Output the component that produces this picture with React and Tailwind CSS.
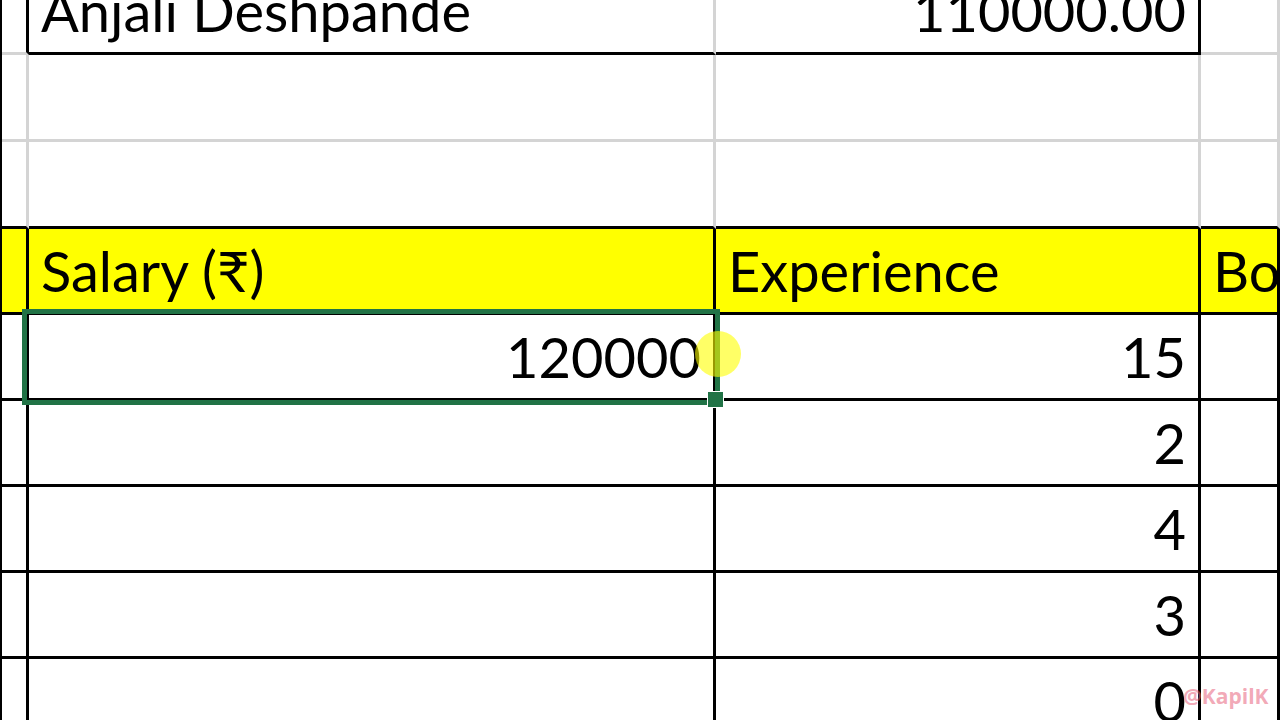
import React from 'react';

// one spreadsheet row: cells = [{text, align, bg, rc, bc}]
function Row({ cells, height = 'h-[87px]' }) {
  return (
    <div className={`grid grid-cols-[27px_687px_485px_79px] ${height}`}>
      {cells.map((c, i) => (
        <div
          key={i}
          className={`flex items-end border-r-[3px] border-b-[3px] pb-[13px] leading-none text-[56px] ${c.bg || 'bg-white'} ${
            c.align === 'right' ? 'justify-end pr-[12px]' : 'justify-start pl-[12px]'
          } overflow-hidden whitespace-nowrap`}
          style={{ borderRightColor: c.rc, borderBottomColor: c.bc }}
        >
          {c.text}
        </div>
      ))}
    </div>
  );
}

const cell = (text, align, rc, bc, bg) => ({ text, align, rc, bc, bg });

export default function App() {
  const black = '#000';
  const grid = '#d4d4d4';

  const data = [
    ['120000', '15'],
    ['', '2'],
    ['', '4'],
    ['', '3'],
    ['', '0'],
  ];

  return (
    <div className="relative w-[1280px] h-[720px] overflow-hidden bg-white border-l-2 border-black text-black font-['Lato','DejaVu_Sans',sans-serif]">
      <div className="-mt-[32px]">
        <Row
          cells={[
            cell('', 'left', black, grid),
            cell('Anjali Deshpande', 'left', grid, black),
            cell('110000.00', 'right', black, black),
            cell('', 'left', grid, grid),
          ]}
        />
        <Row
          cells={[
            cell('', 'left', grid, grid),
            cell('', 'left', grid, grid),
            cell('', 'left', grid, grid),
            cell('', 'left', grid, grid),
          ]}
        />
        <Row
          cells={[
            cell('', 'left', grid, black),
            cell('', 'left', grid, black),
            cell('', 'left', grid, black),
            cell('', 'left', grid, black),
          ]}
        />
        <Row
          height="h-[86px]"
          cells={[
            cell('', 'left', black, black, 'bg-[#ffff00]'),
            cell('Salary (₹)', 'left', black, black, 'bg-[#ffff00]'),
            cell('Experience', 'left', black, black, 'bg-[#ffff00]'),
            cell('Bonus', 'left', black, black, 'bg-[#ffff00]'),
          ]}
        />
        {data.map((r, i) => (
          <Row
            key={i}
            height="h-[86px]"
            cells={[
              cell('', 'left', black, black),
              cell(r[0], 'right', black, black),
              cell(r[1], 'right', black, black),
              cell('', 'left', black, black),
            ]}
          />
        ))}
      </div>

      {/* active cell selection */}
      <div className="absolute left-[20px] top-[309px] w-[698px] h-[96px] border-[5px] border-[#217346]" />
      <div className="absolute left-[706px] top-[392px] w-[15px] h-[15px] bg-[#217346] ring-1 ring-white" />

      {/* cursor highlight */}
      <div className="absolute left-[693px] top-[331px] w-[46px] h-[46px] rounded-full bg-[#ffff00]/60" />

      {/* watermark */}
      <div className="absolute left-[1181px] top-[681px] text-[21px] font-bold text-[#e8607a]/55 font-['Open_Sans',sans-serif]">
        @KapilK
      </div>
    </div>
  );
}
